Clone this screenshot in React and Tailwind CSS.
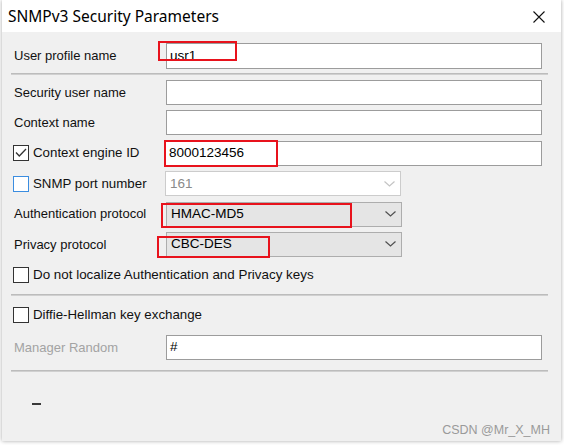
import React from "react";

function Check({ checked = false, blue = false }) {
  return (
    <span
      className={`w-[16px] h-[16px] shrink-0 border bg-white flex items-center justify-center ${
        blue ? "border-[#3b8de0]" : "border-[#333333]"
      }`}
    >
      {checked && (
        <svg width="12" height="10" viewBox="0 0 12 10">
          <polyline points="1,4.5 4.3,8 11,1" fill="none" stroke="#333" strokeWidth="1.3" />
        </svg>
      )}
    </span>
  );
}

function Chevron({ light = false }) {
  return (
    <svg width="11" height="6" viewBox="0 0 11 6">
      <polyline
        points="0.5,0.5 5.5,5 10.5,0.5"
        fill="none"
        stroke={light ? "#c4c4c4" : "#505050"}
        strokeWidth="1.2"
      />
    </svg>
  );
}

function TextBox({ value = "", tall = false, children }) {
  return (
    <div
      className={`relative flex-1 border border-[#9c9c9c] bg-white flex items-center pl-[3px] text-[13.5px] text-black ${
        tall ? "h-[26px]" : "h-[25px]"
      }`}
    >
      {value}
      {children}
    </div>
  );
}

function Combo({ value, disabled = false, children }) {
  return (
    <div
      className={`relative w-[236px] h-[25px] border flex items-center justify-between pl-[4px] pr-[5px] text-[13.5px] ${
        disabled
          ? "bg-white border-[#cccccc] text-[#8a8a8a]"
          : "bg-[#e5e5e5] border-[#adadad] text-black"
      }`}
    >
      <span>{value}</span>
      <Chevron light={disabled} />
      {children}
    </div>
  );
}

function Red({ className }) {
  return <div className={`absolute border-2 border-[#e8121c] pointer-events-none ${className}`} />;
}

function Sep() {
  return <div className="ml-[9px] mr-[13px] h-[2px] border-t border-[#bcbcbc] bg-[#d0d0d0]" />;
}

export default function App() {
  return (
    <div className="w-[564px] h-[445px] bg-white overflow-hidden font-['Liberation_Sans',Arial,sans-serif]">
      <div className="ml-[2px] w-[559px] h-[441px] bg-[#f0f0f0] shadow-[0_0_4px_rgba(0,0,0,0.35)] flex flex-col">
        {/* title bar */}
        <div className="h-[32px] bg-white flex items-center justify-between pl-[6px] pr-[16px] shrink-0">
          <span className="font-['Noto_Sans',sans-serif] text-[15.5px] text-black pt-[1px]">
            SNMPv3 Security Parameters
          </span>
          <svg width="12" height="12" viewBox="0 0 12 12" className="mt-[2px]">
            <path d="M0.5 0.5 L11.5 11.5 M11.5 0.5 L0.5 11.5" stroke="#111" strokeWidth="1.1" fill="none" />
          </svg>
        </div>

        {/* body */}
        <div className="flex flex-col pt-[11px] text-[13px] text-[#111]">
          <div className="flex items-center pl-[12px] pr-[19px]">
            <span className="w-[152px] shrink-0">User profile name</span>
            <TextBox value="usr1" tall>
              <Red className="left-[-9px] top-[-3px] w-[79px] h-[20px]" />
            </TextBox>
          </div>

          <div className="mt-[4px]">
            <Sep />
          </div>

          <div className="flex flex-col gap-[5.4px] mt-[5px] pl-[12px] pr-[19px]">
            <div className="flex items-center">
              <span className="w-[152px] shrink-0">Security user name</span>
              <TextBox />
            </div>
            <div className="flex items-center">
              <span className="w-[152px] shrink-0">Context name</span>
              <TextBox />
            </div>
            <div className="flex items-center">
              <span className="w-[152px] shrink-0 flex items-center gap-[4px] ml-[-1px] text-[13.3px]">
                <Check checked />
                Context engine ID
              </span>
              <TextBox value="8000123456">
                <Red className="left-[-2px] top-[-2px] w-[114px] h-[27px]" />
              </TextBox>
            </div>
            <div className="flex items-center">
              <span className="w-[152px] shrink-0 flex items-center gap-[4px] ml-[-1px] text-[13.3px]">
                <Check blue />
                SNMP port number
              </span>
              <Combo value="161" disabled />
            </div>
            <div className="flex items-center">
              <span className="w-[152px] shrink-0">Authentication protocol</span>
              <Combo value="HMAC-MD5">
                <Red className="left-[-6px] top-[0px] w-[191px] h-[25px]" />
              </Combo>
            </div>
            <div className="flex items-center">
              <span className="w-[152px] shrink-0">Privacy protocol</span>
              <Combo value="CBC-DES">
                <Red className="left-[-10px] top-[3px] w-[113px] h-[22px]" />
              </Combo>
            </div>
          </div>

          <div className="flex items-center gap-[4px] mt-[10px] pl-[11px] h-[16px] text-[13.4px]">
            <Check />
            <span>Do not localize Authentication and Privacy keys</span>
          </div>

          <div className="mt-[11px]">
            <Sep />
          </div>

          <div className="flex items-center gap-[4px] mt-[11px] pl-[11px] h-[16px] text-[13.3px]">
            <Check />
            <span>Diffie-Hellman key exchange</span>
          </div>

          <div className="flex items-center mt-[12px] pl-[12px] pr-[19px]">
            <span className="w-[152px] shrink-0 text-[#a3a3a3]">Manager Random</span>
            <TextBox value="#" />
          </div>

          <div className="mt-[10px]">
            <Sep />
          </div>

          <div className="pl-[30px] mt-[31px] h-[2px]">
            <div className="w-[9px] h-[2px] bg-[#3a3a3a]" />
          </div>

          <div className="flex justify-end pr-[11px] mt-[16px]">
            <span className="text-[12.5px] text-[#9a9a9a]">CSDN @Mr_X_MH</span>
          </div>
        </div>
      </div>
    </div>
  );
}
